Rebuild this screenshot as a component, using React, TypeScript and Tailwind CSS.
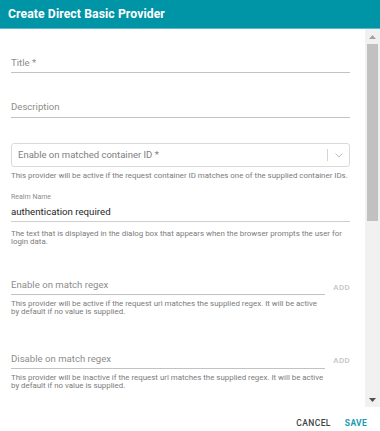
import React from 'react';

const font = { fontFamily: 'Roboto, "Liberation Sans", Arial, sans-serif' };

function Helper({ children, className = '' }: { children: React.ReactNode; className?: string }) {
  return <p className={`text-[7.9px] leading-[8px] text-[#7b7b7b] ${className}`}>{children}</p>;
}

function Triangle({ up, color }: { up?: boolean; color: string }) {
  return (
    <svg width="7" height="4" viewBox="0 0 7 4" aria-hidden>
      <path d={up ? 'M0 4L3.5 0L7 4z' : 'M0 0L7 0L3.5 4z'} fill={color} />
    </svg>
  );
}

export default function App() {
  return (
    <div className="w-[380px] h-[431px] bg-white flex flex-col overflow-hidden" style={font}>
      <div className="h-[29px] shrink-0 bg-[#0094a7] flex items-center pl-[8px] border-b border-[#5fb8c4]">
        <h1 className="text-[12.2px] font-bold text-white tracking-[0.1px]">Create Direct Basic Provider</h1>
      </div>

      <div className="h-[378px] shrink-0 flex">
        <div className="flex-1 overflow-hidden pl-[11px] pr-[15px]">
          {/* Title */}
          <div className="mt-[26px] border-b border-[#c2c2c2] pb-[1px] text-[9.6px] leading-4 text-[#8d8d8d]">
            Title *
          </div>
          {/* Description */}
          <div className="mt-[26px] border-b border-[#c2c2c2] pb-[2px] text-[9.6px] leading-4 text-[#8d8d8d]">
            Description
          </div>
          {/* Container ID select */}
          <div className="mt-[25px] h-[24px] rounded-[3px] border border-[#dadada] flex items-center pl-[6px] pr-[6px]">
            <span className="flex-1 text-[9.5px] text-[#808080]">Enable on matched container ID *</span>
            <span className="w-px h-[12px] bg-[#d4d4d4] mr-[7px]" />
            <svg width="8" height="5" viewBox="0 0 8 5" fill="none" aria-hidden>
              <path d="M0.5 0.5L4 4L7.5 0.5" stroke="#b5b5b5" strokeWidth="0.9" />
            </svg>
          </div>
          <Helper className="mt-[5px] leading-[8.5px]">
            This provider will be active if the request container ID matches one of the supplied container IDs.
          </Helper>
          {/* Realm name */}
          <div className="mt-[13px] text-[7px] leading-[9px] text-[#8d8d8d]">Realm Name</div>
          <div className="mt-[3px] border-b border-[#cfcfcf] pb-[2px] text-[9.7px] leading-[14px] text-[#262626]">
            authentication required
          </div>
          <Helper className="mt-[8px]">
            The text that is displayed in the dialog box that appears when the browser prompts the user for login data.
          </Helper>
          {/* Enable regex */}
          <div className="mt-[31px] flex items-start">
            <div className="w-[314px] border-b border-[#c2c2c2] pb-[1px] text-[9.6px] leading-4 text-[#8d8d8d]">
              Enable on match regex
            </div>
            <span className="ml-auto mt-[6px] text-[8px] leading-[10px] font-medium text-[#c4c4c4] tracking-[0.3px]">ADD</span>
          </div>
          <Helper className="mt-[5px] pr-[25px]">
            This provider will be active if the request url matches the supplied regex. It will be active by default if no value is supplied.
          </Helper>
          {/* Disable regex */}
          <div className="mt-[35px] flex items-start">
            <div className="w-[314px] border-b border-[#c2c2c2] pb-[1px] text-[9.6px] leading-4 text-[#8d8d8d]">
              Disable on match regex
            </div>
            <span className="ml-auto mt-[5px] text-[8px] leading-[10px] font-medium text-[#c4c4c4] tracking-[0.3px]">ADD</span>
          </div>
          <Helper className="mt-[5px] pr-[25px]">
            This provider will be inactive if the request url matches the supplied regex. It will be active by default if no value is supplied.
          </Helper>
        </div>

        {/* scrollbar */}
        <div className="w-[15px] shrink-0 bg-[#f1f1f1] flex flex-col">
          <div className="h-[15px] flex items-center justify-center">
            <Triangle up color="#a3a3a3" />
          </div>
          <div className="h-[177px] mx-[2px] bg-[#c1c1c1]" />
          <div className="flex-1" />
          <div className="h-[15px] flex items-center justify-center">
            <Triangle color="#505050" />
          </div>
        </div>
      </div>

      <div className="h-[24px] shrink-0 flex items-center justify-end pt-[8px] pr-[13px] gap-[14px]">
        <button className="text-[8.5px] font-medium tracking-[0.4px] text-[#424242]">CANCEL</button>
        <button className="text-[8.5px] font-bold tracking-[0.3px] text-[#1a9bb0]">SAVE</button>
      </div>
    </div>
  );
}
